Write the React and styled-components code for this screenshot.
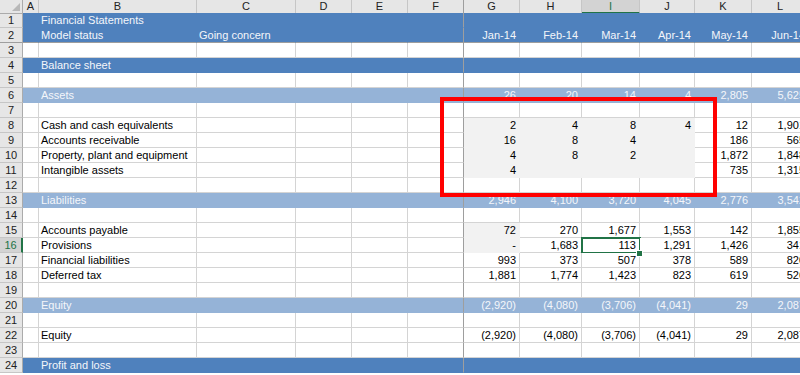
import React from 'react';
import styled, { createGlobalStyle } from 'styled-components';

const DARK = '#4f81bd';
const LIGHT = '#95b3d7';
const INPUT = '#f2f2f2';
const GRID = '#d4d4d4';
const FREEZE = '#9e9e9e';
const GREEN = '#217346';

const GlobalStyle = createGlobalStyle`
  body {
    margin: 0;
    background: #fff;
    font-family: "Liberation Sans", Arial, sans-serif;
    font-size: 11px;
    color: #000;
  }
`;

const columns = [
  { key: 'A', width: 16 },
  { key: 'B', width: 158 },
  { key: 'C', width: 99 },
  { key: 'D', width: 56 },
  { key: 'E', width: 56 },
  { key: 'F', width: 56, freeze: true },
  { key: 'G', width: 56 },
  { key: 'H', width: 62 },
  { key: 'I', width: 58, selected: true },
  { key: 'J', width: 55 },
  { key: 'K', width: 57 },
  { key: 'L', width: 57 },
];

const template = `23px ${columns.map((c) => c.width + 'px').join(' ')}`;

const months = ['Jan-14', 'Feb-14', 'Mar-14', 'Apr-14', 'May-14', 'Jun-14'];

const rows = [
  { n: 1, band: DARK, b: 'Financial Statements' },
  { n: 2, band: DARK, b: 'Model status', c: 'Going concern', vals: months, freezeBottom: true },
  { n: 3 },
  { n: 4, band: DARK, b: 'Balance sheet' },
  { n: 5 },
  { n: 6, band: LIGHT, b: 'Assets', vals: ['26', '20', '14', '4', '2,805', '5,625'] },
  { n: 7 },
  { n: 8, b: 'Cash and cash equivalents', vals: ['2', '4', '8', '4', '12', '1,901'], input: 4 },
  { n: 9, b: 'Accounts receivable', vals: ['16', '8', '4', '', '186', '565'], input: 4 },
  { n: 10, b: 'Property, plant and equipment', vals: ['4', '8', '2', '', '1,872', '1,848'], input: 4 },
  { n: 11, b: 'Intangible assets', vals: ['4', '', '', '', '735', '1,315'], input: 4 },
  { n: 12 },
  { n: 13, band: LIGHT, b: 'Liabilities', vals: ['2,946', '4,100', '3,720', '4,045', '2,776', '3,542'] },
  { n: 14 },
  { n: 15, b: 'Accounts payable', vals: ['72', '270', '1,677', '1,553', '142', '1,855'], input: 1 },
  { n: 16, b: 'Provisions', vals: ['-', '1,683', '113', '1,291', '1,426', '341'], input: 1, selected: true },
  { n: 17, b: 'Financial liabilities', vals: ['993', '373', '507', '378', '589', '820'] },
  { n: 18, b: 'Deferred tax', vals: ['1,881', '1,774', '1,423', '823', '619', '526'] },
  { n: 19 },
  { n: 20, band: LIGHT, b: 'Equity', vals: ['(2,920)', '(4,080)', '(3,706)', '(4,041)', '29', '2,087'] },
  { n: 21 },
  { n: 22, b: 'Equity', vals: ['(2,920)', '(4,080)', '(3,706)', '(4,041)', '29', '2,087'] },
  { n: 23 },
  { n: 24, band: DARK, b: 'Profit and loss' },
];

const Sheet = styled.div`
  position: relative;
  width: 800px;
  height: 375px;
  overflow: hidden;
  background: #fff;
`;

const Row = styled.div`
  display: grid;
  grid-template-columns: ${template};
  height: ${(p) => (p.$header ? 13 : 15)}px;
`;

const Corner = styled.div`
  position: relative;
  box-sizing: border-box;
  background: #e6e6e6;
  border-right: 1px solid #ababab;
  border-bottom: 1px solid #ababab;

  &::after {
    content: '';
    position: absolute;
    right: 2px;
    bottom: 2px;
    border-left: 8px solid transparent;
    border-bottom: 8px solid #b8b8b8;
  }
`;

const ColHead = styled.div`
  box-sizing: border-box;
  background: ${(p) => (p.$selected ? '#d3d3d3' : '#e6e6e6')};
  color: ${(p) => (p.$selected ? GREEN : '#222')};
  border-right: 1px solid ${(p) => (p.$freeze ? FREEZE : '#c6c6c6')};
  border-bottom: ${(p) => (p.$selected ? `2px solid ${GREEN}` : '1px solid #ababab')};
  text-align: center;
  font-size: 11px;
  line-height: 12px;
`;

const RowHead = styled.div`
  box-sizing: border-box;
  background: ${(p) => (p.$selected ? '#d3d3d3' : '#e6e6e6')};
  color: ${(p) => (p.$selected ? GREEN : '#222')};
  border-right: ${(p) => (p.$selected ? `2px solid ${GREEN}` : '1px solid #ababab')};
  border-bottom: 1px solid ${(p) => (p.$freezeBottom ? FREEZE : '#c6c6c6')};
  text-align: center;
  padding-top: 1px;
  line-height: 13px;
`;

const Cell = styled.div`
  position: relative;
  box-sizing: border-box;
  background: ${(p) => p.$fill || '#fff'};
  color: ${(p) => (p.$fill === DARK || p.$fill === LIGHT ? '#f4f6fa' : '#000')};
  border-right: 1px solid ${(p) => (p.$freeze ? FREEZE : p.$fill || GRID)};
  border-bottom: 1px solid ${(p) => (p.$freezeBottom ? FREEZE : p.$fill || GRID)};
  text-align: ${(p) => (p.$right ? 'right' : 'left')};
  padding: 1px 3px 0 2px;
  line-height: 13px;
  white-space: nowrap;

  ${(p) =>
    p.$active &&
    `
    &::after {
      content: '';
      position: absolute;
      left: -1px;
      top: -1px;
      right: -2px;
      bottom: -2px;
      border: 2px solid ${GREEN};
    }
    &::before {
      content: '';
      position: absolute;
      right: -4px;
      bottom: -5px;
      width: 5px;
      height: 5px;
      background: ${GREEN};
      border: 1px solid #fff;
      z-index: 1;
    }
  `}
`;

const Highlight = styled.div`
  position: absolute;
  left: 440px;
  top: 97px;
  width: 277px;
  height: 100px;
  box-sizing: border-box;
  border: 4px solid #ff0000;
  pointer-events: none;
`;

const SheetRow = ({ row }) => {
  const cells = columns.map((col, i) => {
    let text = '';
    let right = false;
    if (col.key === 'B') text = row.b || '';
    if (col.key === 'C') text = row.c || '';
    const valIdx = i - 6;
    if (valIdx >= 0 && row.vals) {
      text = row.vals[valIdx];
      right = true;
    }
    let fill = row.band;
    if (!fill && row.input && valIdx >= 0 && valIdx < row.input) fill = INPUT;
    const active = row.selected && col.key === 'I';
    return (
      <Cell
        key={col.key}
        $fill={fill}
        $right={right}
        $freeze={col.freeze}
        $freezeBottom={row.freezeBottom}
        $active={active}
      >
        {text}
      </Cell>
    );
  });
  return (
    <Row>
      <RowHead $selected={row.selected} $freezeBottom={row.freezeBottom}>
        {row.n}
      </RowHead>
      {cells}
    </Row>
  );
};

export default function App() {
  return (
    <>
      <GlobalStyle />
      <Sheet>
        <Row $header>
          <Corner />
          {columns.map((col) => (
            <ColHead key={col.key} $selected={col.selected} $freeze={col.freeze}>
              {col.key}
            </ColHead>
          ))}
        </Row>
        {rows.map((row) => (
          <SheetRow key={row.n} row={row} />
        ))}
        <Highlight />
      </Sheet>
    </>
  );
}
